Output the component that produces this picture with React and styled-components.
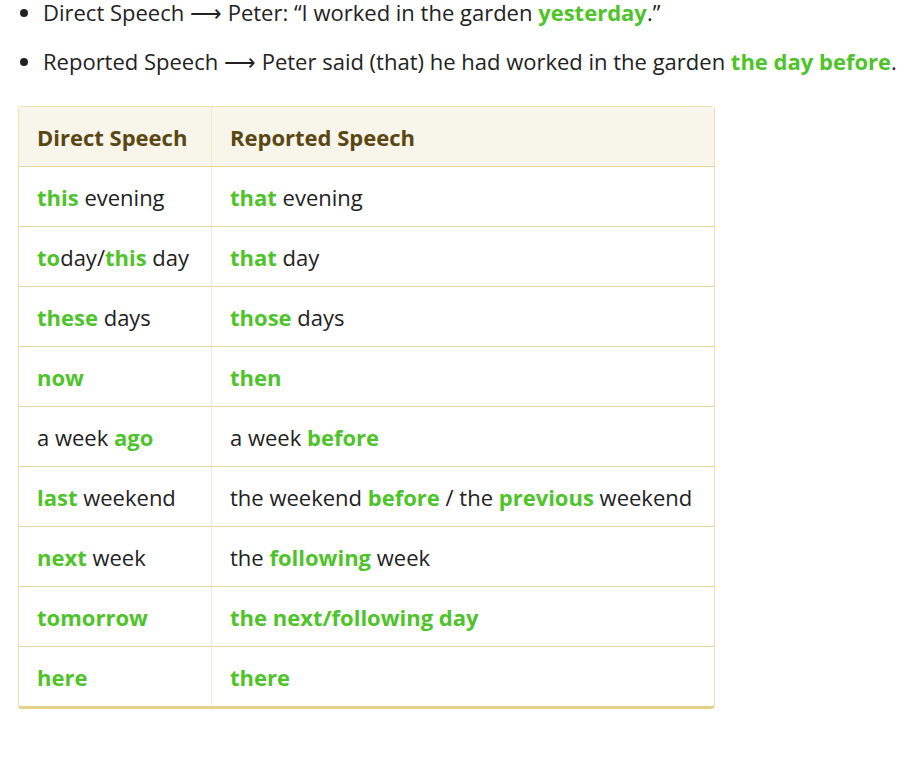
import styled, { createGlobalStyle } from 'styled-components';

const Global = createGlobalStyle`
  body {
    margin: 0;
    background: #fff;
    font-family: "Open Sans", Lato, sans-serif;
    color: #222;
  }
`;

const Page = styled.div`
  padding: 0 0 40px 18px;
`;

const Bullets = styled.ul`
  margin: 0;
  padding: 0 0 0 25px;
  font-size: 22px;
  line-height: 25px;
  li {
    margin-bottom: 24px;
  }
`;

const G = styled.b`
  color: #4ec42a;
  font-weight: 700;
`;

const Table = styled.table`
  width: 697px;
  border-collapse: separate;
  border-spacing: 0;
  border: 1px solid #ece0b4;
  border-bottom: 3px solid #e5d08a;
  border-radius: 4px;
  font-size: 22px;
  margin-top: 32px;
`;

const Th = styled.th`
  background: #f8f5ea;
  color: #5a4713;
  text-align: left;
  font-weight: 700;
  height: 59px;
  padding: 0 18px;
  border-bottom: 1px solid #e8d59c;
  border-left: ${p => (p.first ? 'none' : '1px solid #f2ead0')};
  width: ${p => (p.first ? '156px' : 'auto')};
`;

const Td = styled.td`
  height: 59px;
  padding: 0 18px;
  border-bottom: ${p => (p.last ? 'none' : '1px solid #e8d59c')};
  border-left: ${p => (p.first ? 'none' : '1px solid #f2ead0')};
`;

const rows = [
  [<><G>this</G> evening</>, <><G>that</G> evening</>],
  [<><G>to</G>day/<G>this</G> day</>, <><G>that</G> day</>],
  [<><G>these</G> days</>, <><G>those</G> days</>],
  [<G>now</G>, <G>then</G>],
  [<>a week <G>ago</G></>, <>a week <G>before</G></>],
  [<><G>last</G> weekend</>, <>the weekend <G>before</G> / the <G>previous</G> weekend</>],
  [<><G>next</G> week</>, <>the <G>following</G> week</>],
  [<G>tomorrow</G>, <G>the next/following day</G>],
  [<G>here</G>, <G>there</G>],
];

export default function App() {
  return (
    <Page>
      <Global />
      <Bullets>
        <li>Direct Speech ⟶ Peter: “I worked in the garden <G>yesterday</G>.”</li>
        <li>Reported Speech ⟶ Peter said (that) he had worked in the garden <G>the day before</G>.</li>
      </Bullets>
      <Table>
        <thead>
          <tr>
            <Th first>Direct Speech</Th>
            <Th>Reported Speech</Th>
          </tr>
        </thead>
        <tbody>
          {rows.map((r, i) => (
            <tr key={i}>
              <Td first last={i === rows.length - 1}>{r[0]}</Td>
              <Td last={i === rows.length - 1}>{r[1]}</Td>
            </tr>
          ))}
        </tbody>
      </Table>
    </Page>
  );
}
